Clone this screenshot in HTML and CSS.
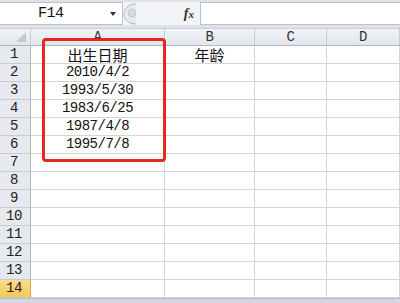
FILE: index.html
```html
<!DOCTYPE html>
<html lang="zh-CN">
<head>
  <meta charset="UTF-8">
  <title>Excel</title>
  <link rel="stylesheet" href="styles.css">
</head>
<body>
  <div class="formula-bar">
    <div class="name-box">
      <span class="name">F14</span>
      <span class="arrow"></span>
    </div>
    <div class="grip">
      <svg width="14" height="22" viewBox="0 0 14 22">
        <path d="M13 1 C5 1 1 6 1 11 C1 16 5 21 13 21" fill="#e8eaed" stroke="#b5bcc5"/>
        <circle cx="9" cy="10" r="4" fill="#d7dbe0" stroke="#c3c8cf"/>
      </svg>
    </div>
    <div class="fx">f<span>x</span></div>
    <div class="formula-input"></div>
  </div>

  <div class="sheet">
    <div class="grid">
      <div class="corner">
        <svg width="10" height="10" viewBox="0 0 10 10"><path d="M10 0 L10 10 L0 10 Z" fill="#c3c9d0"/></svg>
      </div>
      <div class="col-head">A</div>
      <div class="col-head">B</div>
      <div class="col-head">C</div>
      <div class="col-head">D</div>

      <div class="row-head">1</div>
      <div class="cell"><span class="cjk">出生日期</span></div>
      <div class="cell"><span class="cjk">年龄</span></div>
      <div class="cell"></div>
      <div class="cell"></div>

      <div class="row-head">2</div>
      <div class="cell">2010/4/2</div>
      <div class="cell"></div>
      <div class="cell"></div>
      <div class="cell"></div>

      <div class="row-head">3</div>
      <div class="cell">1993/5/30</div>
      <div class="cell"></div>
      <div class="cell"></div>
      <div class="cell"></div>

      <div class="row-head">4</div>
      <div class="cell">1983/6/25</div>
      <div class="cell"></div>
      <div class="cell"></div>
      <div class="cell"></div>

      <div class="row-head">5</div>
      <div class="cell">1987/4/8</div>
      <div class="cell"></div>
      <div class="cell"></div>
      <div class="cell"></div>

      <div class="row-head">6</div>
      <div class="cell">1995/7/8</div>
      <div class="cell"></div>
      <div class="cell"></div>
      <div class="cell"></div>

      <div class="row-head">7</div>
      <div class="cell"></div>
      <div class="cell"></div>
      <div class="cell"></div>
      <div class="cell"></div>

      <div class="row-head">8</div>
      <div class="cell"></div>
      <div class="cell"></div>
      <div class="cell"></div>
      <div class="cell"></div>

      <div class="row-head">9</div>
      <div class="cell"></div>
      <div class="cell"></div>
      <div class="cell"></div>
      <div class="cell"></div>

      <div class="row-head">10</div>
      <div class="cell"></div>
      <div class="cell"></div>
      <div class="cell"></div>
      <div class="cell"></div>

      <div class="row-head">11</div>
      <div class="cell"></div>
      <div class="cell"></div>
      <div class="cell"></div>
      <div class="cell"></div>

      <div class="row-head">12</div>
      <div class="cell"></div>
      <div class="cell"></div>
      <div class="cell"></div>
      <div class="cell"></div>

      <div class="row-head">13</div>
      <div class="cell"></div>
      <div class="cell"></div>
      <div class="cell"></div>
      <div class="cell"></div>

      <div class="row-head active">14</div>
      <div class="cell"></div>
      <div class="cell"></div>
      <div class="cell"></div>
      <div class="cell"></div>
    </div>
    <div class="highlight-box"></div>
  </div>

  <div class="bottom-bar"></div>
</body>
</html>
```

FILE: styles.css
```css
* {
  margin: 0;
  padding: 0;
  box-sizing: border-box;
}

body {
  width: 400px;
  height: 303px;
  overflow: hidden;
  background: #dfe3e8;
  font-family: 'Liberation Mono', 'Noto Sans CJK SC', monospace;
  font-size: 14px;
  letter-spacing: -0.5px;
  color: #111;
}

/* formula bar */
.formula-bar {
  height: 29px;
  padding-top: 2px;
  display: flex;
  background: #dfe3e8;
  border-bottom: 1px solid #c9cfd6;
}

.name-box {
  width: 123px;
  height: 23px;
  background: #fff;
  border: 1px solid #b9c1cb;
  border-left: none;
  display: flex;
  align-items: center;
}

.name {
  padding-left: 38px;
  font-size: 15px;
  flex: 1;
}

.arrow {
  width: 0;
  height: 0;
  border-left: 3.5px solid transparent;
  border-right: 3.5px solid transparent;
  border-top: 4px solid #333;
  margin-right: 6px;
}

.grip {
  width: 16px;
  height: 23px;
  display: flex;
  align-items: center;
  background: #f3f4f6;
}

.fx {
  width: 61px;
  height: 23px;
  background: #f3f4f6;
  font-family: 'Liberation Serif', serif;
  font-style: italic;
  font-weight: bold;
  font-size: 14px;
  letter-spacing: 0;
  color: #333;
  text-align: right;
  padding-right: 6px;
  line-height: 23px;
}

.fx span {
  font-size: 11px;
}

.formula-input {
  flex: 1;
  height: 23px;
  background: #fff;
  border: 1px solid #b9c1cb;
  border-right: none;
}

/* sheet */
.sheet {
  position: relative;
  background: #fff;
}

.grid {
  display: grid;
  grid-template-columns: 31px 134px 90px 72px 73px;
  grid-template-rows: 17px repeat(14, 18px);
}

.corner,
.col-head {
  background: linear-gradient(#f1f3f6, #e2e6eb);
  border-right: 1px solid #c6ccd4;
  border-bottom: 1px solid #aeb6c0;
}

.corner {
  display: flex;
  align-items: flex-end;
  justify-content: flex-end;
  padding: 0 4px 3px 0;
}

.col-head {
  text-align: center;
  line-height: 16px;
  color: #333;
}

.row-head {
  background: #e6e9ee;
  border-right: 1px solid #aeb6c0;
  border-bottom: 1px solid #c6ccd4;
  text-align: center;
  line-height: 17px;
  padding-right: 2px;
  color: #222;
}

.row-head.active {
  background: linear-gradient(#fbdc8a, #f6c955);
  border-right-color: #e0a840;
}

.cell {
  border-right: 1px solid #d6d6d6;
  border-bottom: 1px solid #d6d6d6;
  text-align: center;
  line-height: 17px;
}

.cjk {
  font-family: 'Noto Sans CJK SC', sans-serif;
  font-size: 15px;
  letter-spacing: 0;
  line-height: 17px;
}

.highlight-box {
  position: absolute;
  left: 42px;
  top: 9px;
  width: 124px;
  height: 124px;
  border: 3.5px solid #e5271f;
  border-radius: 4px;
}

.bottom-bar {
  height: 5px;
  background: #d3d8df;
  border-top: 1px solid #b5bcc6;
}
```
